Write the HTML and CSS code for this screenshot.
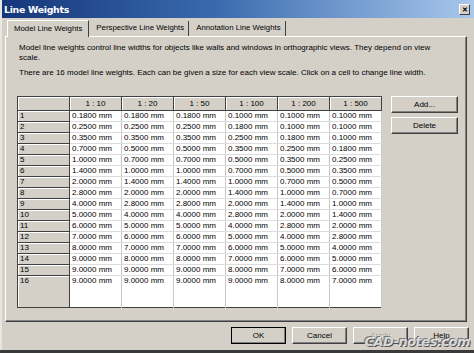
FILE: index.html
```html
<!DOCTYPE html>
<html>
<head>
<meta charset="utf-8">
<link rel="stylesheet" href="styles.css">
</head>
<body>
<div class="window">
  <div class="titlebar">
    <span class="title">Line Weights</span>
    <span class="close">&#x2715;</span>
  </div>
  <div class="tabs">
    <div class="tab active">Model Line Weights</div>
    <div class="tab">Perspective Line Weights</div>
    <div class="tab">Annotation Line Weights</div>
  </div>
  <div class="panel">
    <p class="desc">Model line weights control line widths for objects like walls and windows in orthographic views. They depend on view scale.</p>
    <p class="desc second">There are 16 model line weights. Each can be given a size for each view scale. Click on a cell to change line width.</p>
    <div class="main">
      <table class="grid">
        <thead>
          <tr><th class="corner"></th><th>1 : 10</th><th>1 : 20</th><th>1 : 50</th><th>1 : 100</th><th>1 : 200</th><th>1 : 500</th></tr>
        </thead>
        <tbody id="rows"></tbody>
      </table>
      <div class="side">
        <button class="btn">Add...</button>
        <button class="btn">Delete</button>
      </div>
    </div>
  </div>
  <div class="footer">
    <button class="btn fbtn default">OK</button>
    <button class="btn fbtn">Cancel</button>
    <button class="btn fbtn disabled">Apply</button>
    <button class="btn fbtn">Help</button>
  </div>
  <div class="watermark">CAD-notes.com</div>
</div>
<script src="script.js"></script>
</body>
</html>
```

FILE: script.js
```js
var data = [
  ["0.1800","0.1800","0.1800","0.1000","0.1000","0.1000"],
  ["0.2500","0.2500","0.2500","0.1800","0.1000","0.1000"],
  ["0.3500","0.3500","0.3500","0.2500","0.1800","0.1000"],
  ["0.7000","0.5000","0.5000","0.3500","0.2500","0.1800"],
  ["1.0000","0.7000","0.7000","0.5000","0.3500","0.2500"],
  ["1.4000","1.0000","1.0000","0.7000","0.5000","0.3500"],
  ["2.0000","1.4000","1.4000","1.0000","0.7000","0.5000"],
  ["2.8000","2.0000","2.0000","1.4000","1.0000","0.7000"],
  ["4.0000","2.8000","2.8000","2.0000","1.4000","1.0000"],
  ["5.0000","4.0000","4.0000","2.8000","2.0000","1.4000"],
  ["6.0000","5.0000","5.0000","4.0000","2.8000","2.0000"],
  ["7.0000","6.0000","6.0000","5.0000","4.0000","2.8000"],
  ["8.0000","7.0000","7.0000","6.0000","5.0000","4.0000"],
  ["9.0000","8.0000","8.0000","7.0000","6.0000","5.0000"],
  ["9.0000","9.0000","9.0000","8.0000","7.0000","6.0000"],
  ["9.0000","9.0000","9.0000","9.0000","8.0000","7.0000"]
];
var tb = document.getElementById("rows");
data.forEach(function (r, i) {
  var tr = document.createElement("tr");
  if (i === data.length - 1) tr.className = "last";
  var th = document.createElement("th");
  th.className = "rh";
  th.textContent = String(i + 1);
  tr.appendChild(th);
  r.forEach(function (v) {
    var td = document.createElement("td");
    td.textContent = v + " mm";
    tr.appendChild(td);
  });
  tb.appendChild(tr);
});
```

FILE: styles.css
```css
* { box-sizing: border-box; }
html, body { margin: 0; padding: 0; background: #3a3a3a; }
body { width: 474px; height: 353px; overflow: hidden; font-family: "Liberation Sans", Arial, sans-serif; font-size: 8px; color: #000; }

.window {
  position: relative;
  width: 474px;
  height: 350px;
  background: #d4d0c8;
  border-left: 2px solid #e8e6e0;
  display: flex;
  flex-direction: column;
}

.titlebar {
  height: 18px;
  background: linear-gradient(to right, #16367a 0%, #3a6aae 45%, #a8c8ec 100%);
  display: flex;
  align-items: center;
  justify-content: space-between;
  padding: 0 4px 0 2px;
}
.title { color: #fff; font-weight: bold; font-size: 9.4px; font-family: "DejaVu Sans", sans-serif; letter-spacing: -0.3px; }
.close {
  width: 11px; height: 11px;
  background: #d4d0c8;
  border: 1px solid; border-color: #fff #404040 #404040 #fff;
  font-size: 7px; font-weight: bold; line-height: 9px; text-align: center;
}

.tabs { display: flex; height: 17px; margin-top: 1px; padding-left: 5px; align-items: flex-end; }
.tab {
  height: 15px;
  padding: 0 4px 0 5px;
  line-height: 14px;
  border-right: 1px solid #404040;
  margin-right: 2px;
  white-space: nowrap;
  font-size: 7.8px;
}
.tab.active {
  height: 17px;
  line-height: 16px;
  padding: 0 6px;
  border-top: 1px solid #fff;
  border-left: 1px solid #fff;
  border-right: 1px solid #404040;
  background: #d4d0c8;
  position: relative;
  margin-bottom: -1px;
  z-index: 1;
}

.panel {
  margin-left: 3px;
  width: 462px;
  height: 286px;
  border: 1px solid; border-color: #fff #404040 #404040 #fff;
  box-shadow: inset -1px -1px 0 #808080;
  padding: 6px 0 0 11px;
}
.desc { margin: 0; line-height: 10px; padding-left: 2px; width: 428px; }
.desc.second { margin-top: 5px; }

.main { display: flex; margin-top: 18px; align-items: flex-start; }

.grid {
  border-collapse: collapse;
  table-layout: fixed;
  width: 362px;
  border: 1px solid #404040;
  background: #fff;
}
.grid th, .grid td { width: 52px; padding: 0 2px; white-space: nowrap; overflow: hidden; font-weight: normal; }
.grid thead th {
  height: 14px;
  background: #d4d0c8;
  text-align: center;
  border-right: 1px solid #404040;
  border-bottom: 1px solid #404040;
  box-shadow: inset 1px 1px 0 #fff;
  font-size: 8px;
}
.grid td {
  height: 11px;
  line-height: 10px;
  border-right: 1px solid #c8c8c8;
  border-bottom: 1px solid #dcdcdc;
  font-size: 8px;
}
.grid th.rh {
  height: 11px;
  line-height: 10px;
  text-align: left;
  background: #d4d0c8;
  border-right: 1px solid #404040;
  border-bottom: 1px solid #404040;
  box-shadow: inset 1px 1px 0 #fff;
  font-size: 8px;
}
.grid tr.last td, .grid tr.last th { height: 32px; vertical-align: top; border-bottom: none; }

.side { display: flex; flex-direction: column; gap: 4px; margin-left: 9px; }
.btn {
  width: 67px;
  height: 17px;
  background: #d4d0c8;
  border: 1px solid; border-color: #fff #404040 #404040 #fff;
  box-shadow: inset -1px -1px 0 #808080;
  font-family: "Liberation Sans", Arial, sans-serif;
  font-size: 8px;
  padding: 0;
  color: #000;
}

.footer { display: flex; justify-content: flex-end; gap: 6px; margin-top: 5px; padding-right: 5px; }
.fbtn { width: 55px; height: 17px; }
.fbtn.default { outline: 1px solid #000; outline-offset: -1px; border-color: #fff #000 #000 #fff; }
.fbtn.disabled { color: #a0a0a0; text-shadow: 1px 1px 0 #fff; }

.watermark {
  position: absolute;
  right: 4px;
  bottom: 1px;
  font-family: "DejaVu Sans", sans-serif;
  font-size: 13px;
  font-weight: bold;
  font-style: italic;
  color: rgba(255,255,255,0.75);
  text-shadow: 1px 1px 0 #555, -1px -1px 0 #777;
  letter-spacing: -0.5px;
}
```
